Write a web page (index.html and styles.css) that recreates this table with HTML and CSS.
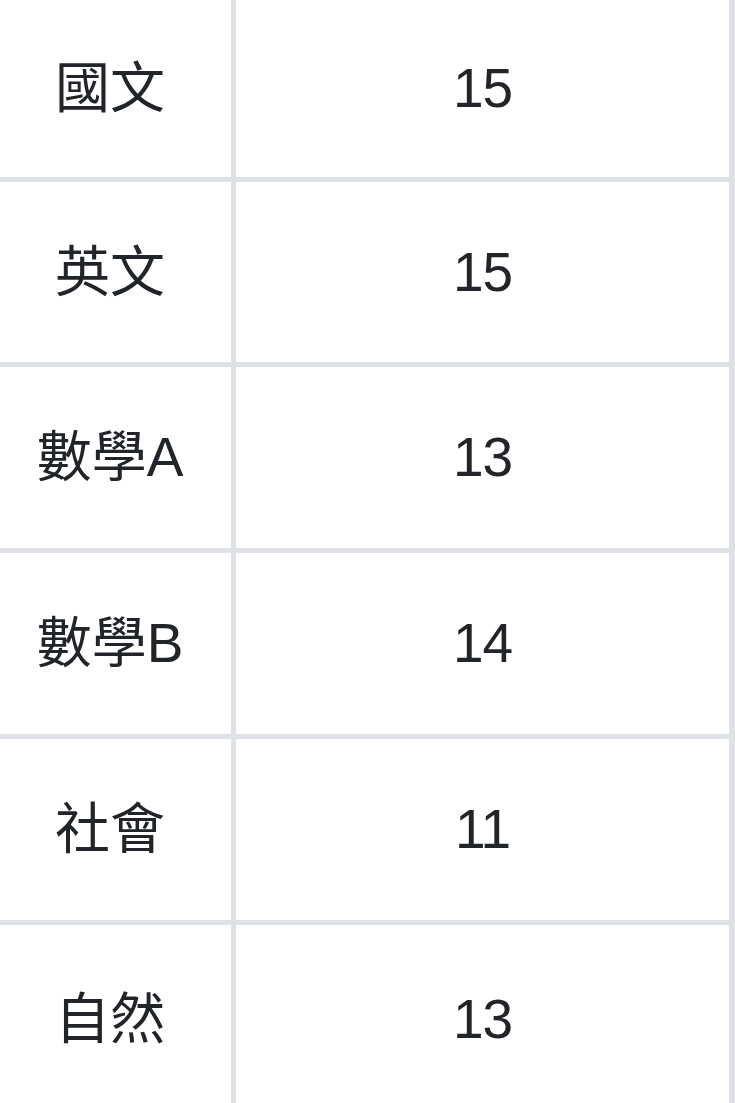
FILE: index.html
```html
<!DOCTYPE html>
<html lang="zh-Hant">
<head>
<meta charset="utf-8">
<link rel="stylesheet" href="styles.css">
</head>
<body>
<div class="table">
  <div class="cell subject">國文</div><div class="cell score">15</div>
  <div class="cell subject">英文</div><div class="cell score">15</div>
  <div class="cell subject">數學A</div><div class="cell score">13</div>
  <div class="cell subject">數學B</div><div class="cell score">14</div>
  <div class="cell subject">社會</div><div class="cell score">11</div>
  <div class="cell subject last">自然</div><div class="cell score last">13</div>
</div>
</body>
</html>
```
FILE: styles.css
```css
html, body {
  margin: 0;
  padding: 0;
  background: #ffffff;
  overflow: hidden;
}
.table {
  display: grid;
  grid-template-columns: 231px 493px;
  grid-template-rows: 177px 180px 181px 181px 181px 190px;
  column-gap: 5px;
  row-gap: 5px;
  width: 735px;
  height: 1103px;
  padding-right: 6px;
  box-sizing: border-box;
  background: #dee2e6;
}
.cell {
  background: #ffffff;
  display: flex;
  align-items: center;
  justify-content: center;
  font-family: "Liberation Sans", "Noto Sans CJK TC", sans-serif;
  font-size: 55px;
  color: #212529;
  line-height: 1;
}
.subject {
  padding-right: 11px;
}
.score {
  letter-spacing: -1px;
}
.last {
  align-items: flex-start;
  padding-top: 67px;
}
```
